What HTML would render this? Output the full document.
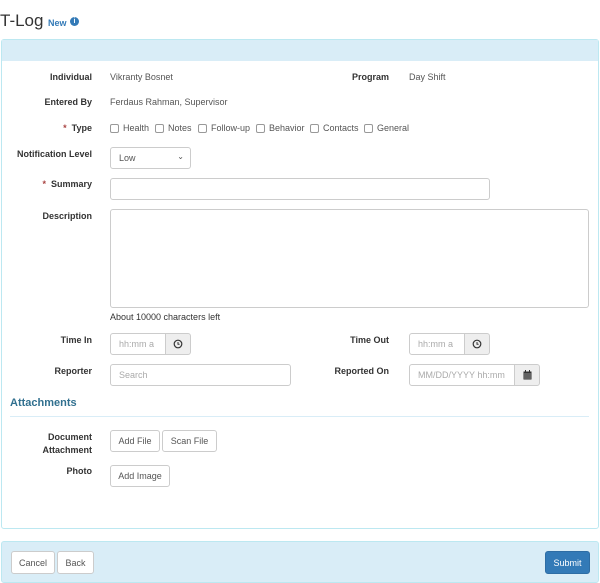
<!DOCTYPE html>
<html><head><meta charset="utf-8"><style>
*{box-sizing:border-box;margin:0;padding:0}
body{width:600px;height:583px;background:#fff;font-family:"Liberation Sans",sans-serif;font-size:9px;color:#333;position:relative;overflow:hidden}
.a{position:absolute}
.l{position:absolute;font-weight:bold;text-align:right;width:92px;left:0;line-height:11px}
.v{position:absolute;line-height:11px;color:#555}
.in{position:absolute;border:1px solid #ccc;border-radius:3px;background:#fff;color:#aaa;padding-left:8px;display:flex;align-items:center}
.ad{position:absolute;background:#eee;border:1px solid #ccc;border-radius:0 3px 3px 0;display:flex;align-items:center;justify-content:center}
.btn{position:absolute;border:1px solid #ccc;border-radius:3px;background:#fff;display:flex;align-items:center;justify-content:center;color:#555}
.cb{position:absolute;width:9px;height:9px;border:1px solid #999;border-radius:2px;top:124px}
.ct{position:absolute;top:123px;line-height:10px;color:#555}
.req{color:#a94442;margin-right:5px}
</style></head><body>
<div class="a" style="left:0;top:11px;font-size:17px;color:#333">T-Log</div>
<div class="a" style="left:48px;top:18px;font-size:9px;font-weight:bold;color:#337ab7">New</div>
<div class="a" style="left:70px;top:17px;width:9px;height:9px;border-radius:50%;background:#337ab7;color:#fff;font-size:7px;font-weight:bold;text-align:center;line-height:9px">i</div>

<div class="a" style="left:1px;top:39px;width:598px;height:490px;border:1px solid #bce8f1;border-radius:3px"></div>
<div class="a" style="left:2px;top:40px;width:596px;height:21px;background:#d9edf7"></div>

<div class="l" style="top:72px">Individual</div><div class="v" style="left:110px;top:72px">Vikranty Bosnet</div>
<div class="l" style="top:72px;left:297px">Program</div><div class="v" style="left:409px;top:72px">Day Shift</div>
<div class="l" style="top:97px">Entered By</div><div class="v" style="left:110px;top:97px">Ferdaus Rahman, Supervisor</div>
<div class="l" style="top:123px"><span class="req">*</span>Type</div>
<div class="cb" style="left:110px"></div><div class="ct" style="left:123px">Health</div>
<div class="cb" style="left:155px"></div><div class="ct" style="left:168px">Notes</div>
<div class="cb" style="left:198px"></div><div class="ct" style="left:211px">Follow-up</div>
<div class="cb" style="left:256px"></div><div class="ct" style="left:269px">Behavior</div>
<div class="cb" style="left:310px"></div><div class="ct" style="left:323px">Contacts</div>
<div class="cb" style="left:364px"></div><div class="ct" style="left:377px">General</div>

<div class="l" style="top:149px">Notification Level</div>
<div class="in" style="left:110px;top:147px;width:81px;height:22px;color:#555">Low<span style="position:absolute;right:6px;top:4px;font-size:8px">&#8964;</span></div>
<div class="l" style="top:179px"><span class="req">*</span>Summary</div>
<div class="in" style="left:110px;top:178px;width:380px;height:22px"></div>
<div class="l" style="top:211px">Description</div>
<div class="in" style="left:110px;top:209px;width:479px;height:99px"></div>
<div class="v" style="left:110px;top:312px;color:#333">About 10000 characters left</div>

<div class="l" style="top:335px">Time In</div>
<div class="in" style="left:110px;top:333px;width:56px;height:22px;border-radius:3px 0 0 3px">hh:mm a</div>
<div class="ad" style="left:165px;top:333px;width:26px;height:22px">
<svg width="10" height="10" viewBox="0 0 10 10"><circle cx="5" cy="5" r="3.8" fill="none" stroke="#333" stroke-width="1.2"/><path d="M5 3v2.2h1.6" fill="none" stroke="#333" stroke-width="1"/></svg></div>
<div class="l" style="top:335px;left:297px">Time Out</div>
<div class="in" style="left:409px;top:333px;width:56px;height:22px;border-radius:3px 0 0 3px">hh:mm a</div>
<div class="ad" style="left:464px;top:333px;width:26px;height:22px">
<svg width="10" height="10" viewBox="0 0 10 10"><circle cx="5" cy="5" r="3.8" fill="none" stroke="#333" stroke-width="1.2"/><path d="M5 3v2.2h1.6" fill="none" stroke="#333" stroke-width="1"/></svg></div>

<div class="l" style="top:366px">Reporter</div>
<div class="in" style="left:110px;top:364px;width:181px;height:22px">Search</div>
<div class="l" style="top:366px;left:297px">Reported On</div>
<div class="in" style="left:409px;top:364px;width:106px;height:22px;border-radius:3px 0 0 3px">MM/DD/YYYY hh:mm</div>
<div class="ad" style="left:514px;top:364px;width:26px;height:22px">
<svg width="9" height="10" viewBox="0 0 9 10"><rect x="0.5" y="1.5" width="8" height="8" fill="#333"/><rect x="2" y="0" width="1" height="2" fill="#333"/><rect x="6" y="0" width="1" height="2" fill="#333"/><path d="M1 4h7M1 6h7M1 8h7" stroke="#eee" stroke-width="0.5"/></svg></div>

<div class="a" style="left:10px;top:397px;font-size:11px;font-weight:bold;color:#31708f">Attachments</div>
<div class="a" style="left:10px;top:416px;width:579px;height:1px;background:#d9edf7"></div>
<div class="l" style="top:431px;line-height:13px">Document<br>Attachment</div>
<div class="btn" style="left:110px;top:430px;width:50px;height:22px">Add File</div>
<div class="btn" style="left:162px;top:430px;width:55px;height:22px">Scan File</div>
<div class="l" style="top:466px">Photo</div>
<div class="btn" style="left:110px;top:465px;width:60px;height:22px">Add Image</div>

<div class="a" style="left:1px;top:541px;width:598px;height:42px;background:#d9edf7;border:1px solid #bce8f1;border-radius:3px"></div>
<div class="btn" style="left:11px;top:551px;width:44px;height:23px">Cancel</div>
<div class="btn" style="left:57px;top:551px;width:37px;height:23px">Back</div>
<div class="btn" style="left:545px;top:551px;width:45px;height:23px;background:#337ab7;border-color:#2e6da4;color:#fff">Submit</div>
</body></html>
